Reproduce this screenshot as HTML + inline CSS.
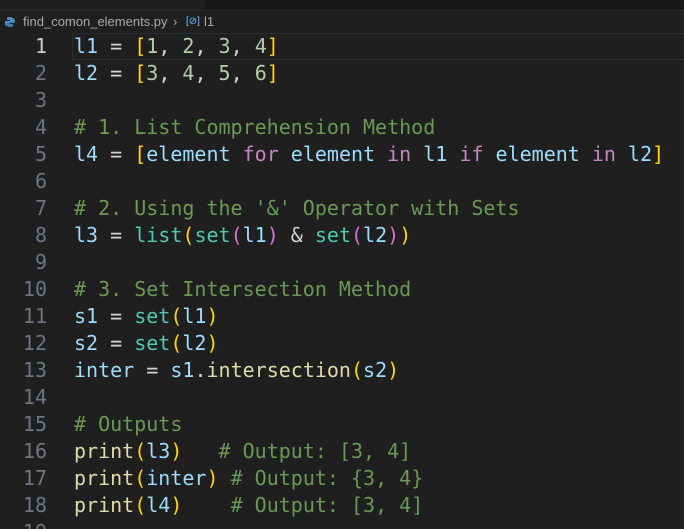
<!DOCTYPE html>
<html style="overflow:hidden;width:684px;height:529px"><head><meta charset="utf-8"><style>
html,body{margin:0;width:684px;height:529px;overflow:hidden;}
body{position:relative;background:#1f1f1f;font-family:"DejaVu Sans Mono","Liberation Mono",monospace;}
.top{position:absolute;left:0;top:0;width:684px;height:10px;background:#1f1f1f;}
.top2{position:absolute;left:205px;top:0;width:479px;height:10px;background:#181818;}
.sep{position:absolute;left:0;top:10px;width:684px;height:1px;background:#2b2b2b;}
.bc{position:absolute;left:0;top:11px;height:22px;width:684px;font:13px "Liberation Sans",sans-serif;color:#a9a9a9;line-height:22px;}
.hl{position:absolute;left:72px;top:33px;width:612px;height:25px;border:1px solid #2c2c2c;}
.code{position:absolute;left:0;top:33px;height:496px;overflow:hidden;font-size:20px;line-height:27px;white-space:pre;}
.ln{display:inline-block;width:47px;text-align:right;color:#6e7681;margin-right:27px;}
.ln.a{color:#cccccc}
.v{color:#9cdcfe}.n{color:#b5cea8}.g{color:#ffd700}.p{color:#da70d6}.k{color:#c586c0}.f{color:#dcdcaa}.c{color:#6a9955}.t{color:#4ec9b0}.o{color:#d4d4d4}
</style></head><body>
<div class="top"></div><div class="top2"></div><div class="sep"></div>
<div class="bc"><svg style="position:absolute;left:5px;top:6px" width="10" height="10" viewBox="0 0 10 10"><path d="M5 0C2 0 2 1 2 2v1h3v1H1C0 4 0 5 0 6s0 3 2 3V7c0-1 1-2 2-2h3c1 0 1-1 1-1V2C8 1 7 0 5 0z" fill="#4b8bbe"/><path d="M5 10c3 0 3-1 3-2V7H5V6h4c1 0 1-1 1-2S10 1 8 1v2c0 1-1 2-2 2H3C2 5 2 6 2 6v2c0 1 1 2 3 2z" fill="#3f7fb0"/></svg><span style="position:absolute;left:23px">find_comon_elements.py</span><span style="position:absolute;left:173px">›</span><span style="position:absolute;left:186px;color:#75beff;font-size:10px">[⊘]</span><span style="position:absolute;left:204px">l1</span></div>
<div class="hl"></div>
<div class="code"><span class="ln a">1</span><span class="v">l1</span><span class="o"> = </span><span class="g">[</span><span class="n">1</span><span class="o">, </span><span class="n">2</span><span class="o">, </span><span class="n">3</span><span class="o">, </span><span class="n">4</span><span class="g">]</span>
<span class="ln">2</span><span class="v">l2</span><span class="o"> = </span><span class="g">[</span><span class="n">3</span><span class="o">, </span><span class="n">4</span><span class="o">, </span><span class="n">5</span><span class="o">, </span><span class="n">6</span><span class="g">]</span>
<span class="ln">3</span>
<span class="ln">4</span><span class="c"># 1. List Comprehension Method</span>
<span class="ln">5</span><span class="v">l4</span><span class="o"> = </span><span class="g">[</span><span class="v">element</span> <span class="k">for</span> <span class="v">element</span> <span class="k">in</span> <span class="v">l1</span> <span class="k">if</span> <span class="v">element</span> <span class="k">in</span> <span class="v">l2</span><span class="g">]</span>
<span class="ln">6</span>
<span class="ln">7</span><span class="c"># 2. Using the '&amp;' Operator with Sets</span>
<span class="ln">8</span><span class="v">l3</span><span class="o"> = </span><span class="t">list</span><span class="g">(</span><span class="t">set</span><span class="p">(</span><span class="v">l1</span><span class="p">)</span><span class="o"> &amp; </span><span class="t">set</span><span class="p">(</span><span class="v">l2</span><span class="p">)</span><span class="g">)</span>
<span class="ln">9</span>
<span class="ln">10</span><span class="c"># 3. Set Intersection Method</span>
<span class="ln">11</span><span class="v">s1</span><span class="o"> = </span><span class="t">set</span><span class="g">(</span><span class="v">l1</span><span class="g">)</span>
<span class="ln">12</span><span class="v">s2</span><span class="o"> = </span><span class="t">set</span><span class="g">(</span><span class="v">l2</span><span class="g">)</span>
<span class="ln">13</span><span class="v">inter</span><span class="o"> = </span><span class="v">s1</span><span class="o">.</span><span class="f">intersection</span><span class="g">(</span><span class="v">s2</span><span class="g">)</span>
<span class="ln">14</span>
<span class="ln">15</span><span class="c"># Outputs</span>
<span class="ln">16</span><span class="f">print</span><span class="g">(</span><span class="v">l3</span><span class="g">)</span>   <span class="c"># Output: [3, 4]</span>
<span class="ln">17</span><span class="f">print</span><span class="g">(</span><span class="v">inter</span><span class="g">)</span> <span class="c"># Output: {3, 4}</span>
<span class="ln">18</span><span class="f">print</span><span class="g">(</span><span class="v">l4</span><span class="g">)</span>    <span class="c"># Output: [3, 4]</span>
<span class="ln">19</span></div>
</body></html>
